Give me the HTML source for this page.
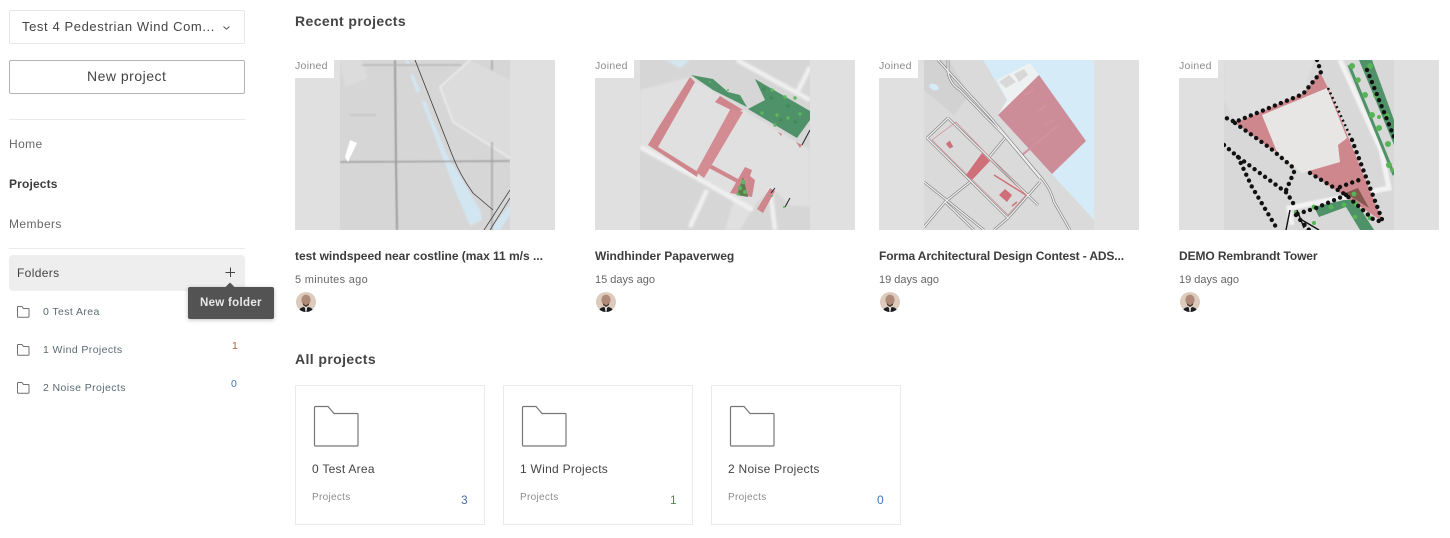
<!DOCTYPE html>
<html><head><meta charset="utf-8"><style>
html,body{margin:0;padding:0;background:#fff}
body{width:1450px;height:538px;position:relative;overflow:hidden;font-family:"Liberation Sans",sans-serif;color:#3c3c3c}
.a{position:absolute;white-space:nowrap}
.t{font-size:12px;line-height:16px;letter-spacing:.27px}
.h{font-size:14px;line-height:18px;font-weight:bold;letter-spacing:.4px;color:#444}
.title{font-size:12px;line-height:16px;font-weight:bold;color:#3c3c3c;top:248px}
.time{font-size:11px;line-height:14px;letter-spacing:0;color:#666;top:273px}
.nav{font-size:12px;line-height:16px;letter-spacing:.4px;color:#666;left:9px}
.fold{font-size:10.5px;line-height:14px;letter-spacing:.4px;color:#5a6a72}
.thumb{position:absolute;top:60px;width:260px;height:170px;background:#e0e0e0;overflow:hidden}
.thumb svg{position:absolute;left:45px;top:0}
.tag{position:absolute;left:0;top:0;width:39px;height:18px;background:#fff;font-size:10.5px;line-height:13px;letter-spacing:.3px;color:#8a8a8a}
.tag span{position:absolute;left:0;top:0;line-height:13px}
.box{position:absolute;top:385px;width:188px;height:138px;border:1px solid #eaeaea}
.sm{font-size:10px;line-height:13px;letter-spacing:.3px;color:#8c8c8c}
</style></head><body>

<div class="a" style="left:9px;top:10px;width:234px;height:32px;border:1px solid #e6e6e6;border-radius:2px"></div>
<div class="a" style="left:22px;top:18px;font-size:13px;line-height:17px;letter-spacing:.6px;color:#444">Test 4 Pedestrian Wind Com...</div>
<svg class="a" style="left:222px;top:25px" width="9" height="6"><path d="M1.5 1.5L4.5 4.2L7.5 1.5" fill="none" stroke="#555" stroke-width="1"/></svg>

<div class="a" style="left:9px;top:60px;width:234px;height:32px;border:1px solid #b4b4b4;border-radius:2px"></div>
<div class="a" style="left:87px;top:68px;font-size:14px;line-height:17px;letter-spacing:.5px;color:#444">New project</div>

<div class="a" style="left:9px;top:119px;width:236px;height:1px;background:#eaeaea"></div>
<div class="a nav" style="top:136px">Home</div>
<div class="a nav" style="top:176px;font-weight:bold;color:#3c3c3c;letter-spacing:.15px">Projects</div>
<div class="a nav" style="top:216px">Members</div>
<div class="a" style="left:9px;top:248px;width:236px;height:1px;background:#eaeaea"></div>

<div class="a" style="left:9px;top:255px;width:236px;height:36px;background:#eeeeee;border-radius:4px"></div>
<div class="a" style="left:17px;top:265px;font-size:12px;line-height:16px;letter-spacing:.35px;color:#444">Folders</div>
<svg class="a" style="left:225px;top:267px" width="11" height="11"><path d="M5.5 .5V10M.5 5.5H10" stroke="#444" stroke-width="1" fill="none"/></svg>

<svg class="a" style="left:17px;top:306px" width="13" height="12"><path d="M.5 1.2Q.5 .5 1.2 .5H5L6.5 2.5H11.3Q12 2.5 12 3.2V10.6Q12 11.3 11.3 11.3H1.2Q.5 11.3 .5 10.6Z" fill="none" stroke="#707070" stroke-width="1"/></svg>
<svg class="a" style="left:17px;top:344px" width="13" height="12"><path d="M.5 1.2Q.5 .5 1.2 .5H5L6.5 2.5H11.3Q12 2.5 12 3.2V10.6Q12 11.3 11.3 11.3H1.2Q.5 11.3 .5 10.6Z" fill="none" stroke="#707070" stroke-width="1"/></svg>
<svg class="a" style="left:17px;top:382px" width="13" height="12"><path d="M.5 1.2Q.5 .5 1.2 .5H5L6.5 2.5H11.3Q12 2.5 12 3.2V10.6Q12 11.3 11.3 11.3H1.2Q.5 11.3 .5 10.6Z" fill="none" stroke="#707070" stroke-width="1"/></svg>
<div class="a fold" style="left:43px;top:305px">0 Test Area</div>
<div class="a fold" style="left:43px;top:343px">1 Wind Projects</div>
<div class="a fold" style="left:43px;top:381px">2 Noise Projects</div>
<div class="a" style="left:232px;top:339px;font-size:10.5px;line-height:14px;color:#a8673a">1</div>
<div class="a" style="left:231px;top:377px;font-size:10.5px;line-height:14px;color:#3f78b5">0</div>

<div class="a" style="left:188px;top:287px;width:86px;height:32px;background:#535353;border-radius:2px;box-shadow:0 1px 4px rgba(0,0,0,.25)"></div>
<svg class="a" style="left:225px;top:282px" width="10" height="6"><path d="M0 5.5L5 .5L10 5.5Z" fill="#535353"/></svg>
<div class="a" style="left:200px;top:296px;font-size:11.5px;line-height:15px;font-weight:bold;color:#e8e8e8;letter-spacing:.3px">New folder</div>

<div class="a h" style="left:295px;top:12px">Recent projects</div>

<!-- Card 1 -->
<div class="thumb" style="left:295px">
<svg width="170" height="170" viewBox="0 0 170 170">
<defs>
<filter id="b1"><feGaussianBlur stdDeviation="0.7"/></filter>
<filter id="b2"><feGaussianBlur stdDeviation="1.1"/></filter>
<filter id="b3"><feGaussianBlur stdDeviation="0.35"/></filter>
</defs>
<rect width="170" height="170" fill="#d6d6d6"/>
<g filter="url(#b1)">
<polygon points="130,0 100,27 113,62 170,98 170,20" fill="#dcdcdc"/>
<polyline points="130,0 100,27 113,62 170,98" fill="none" stroke="#e8e8e8" stroke-width="2"/>
<polygon points="0,0 22,0 28,18 5,27" fill="#dcdcdc"/>
<polygon points="82,42 85,41 107,95 140,150 142,160 130,166 115,130" fill="#d2e6f2"/>
<polygon points="70,15 73,14 80,31 77,33" fill="#d2e6f2"/>
<polygon points="65,0 68,0 70,4 67,4" fill="#d2e6f2"/>
<polygon points="150,170 170,145 170,155 160,170" fill="#d2e6f2"/>
<path d="M55 0L56 102L57 170" stroke="#909090" stroke-width="1.6" fill="none"/>
<path d="M0 102L170 101" stroke="#9c9c9c" stroke-width="1.4" fill="none"/>
<path d="M22 5H122" stroke="#b0b0b0" stroke-width="1.2" fill="none"/>
<path d="M152 0V10M152 82V170" stroke="#a0a0a0" stroke-width="1.4" fill="none"/>
<path d="M10 55H36" stroke="#cccccc" stroke-width="3" fill="none"/>
</g>
<path d="M75 0L113 97Q120 115 133 133L153 150" stroke="#3a3a3a" stroke-width=".8" fill="none"/>
<path d="M144 170L170 130M150 170L170 138" stroke="#444" stroke-width=".8" fill="none"/>
<polygon points="10,80 17,83 8,102 5,97" fill="#fff"/>
</svg>
<div class="tag"><span>Joined</span></div>
</div>

<!-- Card 2 -->
<div class="thumb" style="left:595px">
<svg width="170" height="170" viewBox="0 0 170 170">
<rect width="170" height="170" fill="#d6d6d6"/>
<g filter="url(#b2)">
<polygon points="25,0 50,0 40,8" fill="#d4e8f2"/>
<polygon points="50,17 170,90 170,147 150,145 132,128 115,145 100,170 85,170 95,137 0,87 0,30" fill="#e0e0e0"/>
<path d="M0 87L57 118L113 150M97 0L170 40M170 7L157 33M67 130L50 167M130 128L135 170" stroke="#f0f0f0" stroke-width="4.5" fill="none"/>
</g>
<g filter="url(#b3)">
<polygon points="50,17 55,22 18,87 58,112 57,117 8,85 18,68" fill="#cf868c"/>
<polygon points="80,36 103,50 95,52 75,42" fill="#cf868c"/>
<polygon points="91,48 103,52 64,118 56,112" fill="#d28c92"/>
<polygon points="72,105 98,119 97,123 69,108" fill="#cf868c"/>
<polygon points="105,107 112,110 110,116 115,120 112,137 90,133" fill="#cf868c"/>
<polygon points="103,117 108,137 97,135" fill="#5c7d52"/>
<polygon points="130,128 135,131 123,153 117,149" fill="#cf868c"/>
<polygon points="51,15 73,19 88,32 100,35 107,47 87,37 73,30" fill="#4f9168"/>
<polygon points="115,19 170,51 170,60 157,78 108,49 125,40" fill="#4f9168"/>
<polygon points="138,72 142,74 141,76" fill="#cf868c"/>
<polygon points="156,82 162,85 160,88" fill="#cf868c"/>
<path d="M162 85L170 70M131 133L135 128M145 147L150 138" stroke="#222" stroke-width="1" fill="none"/>
<g fill="#3f8a55"><circle cx="124" cy="29" r="1.6"/><circle cx="131" cy="38" r="1.6"/><circle cx="148" cy="46" r="1.6"/><circle cx="141" cy="60" r="1.6"/><circle cx="155" cy="62" r="1.6"/></g>
<g fill="#5cb85c"><circle cx="132" cy="30" r="1.7"/><circle cx="145" cy="37" r="1.7"/><circle cx="155" cy="38" r="1.7"/><circle cx="137" cy="55" r="1.7"/><circle cx="148" cy="58" r="1.7"/><circle cx="160" cy="54" r="1.7"/><circle cx="122" cy="53" r="1.7"/><circle cx="135" cy="65" r="1.7"/><circle cx="70" cy="22" r="1"/><circle cx="88" cy="30" r="1"/><circle cx="103" cy="122" r="2.2"/><circle cx="100" cy="128" r="2"/><circle cx="105" cy="132" r="2"/><circle cx="98" cy="134" r="1.5"/><circle cx="132" cy="136" r="1"/><circle cx="144" cy="147" r="1"/></g>
</g>
</svg>
<div class="tag"><span>Joined</span></div>
</div>

<!-- Card 3 -->
<div class="thumb" style="left:879px">
<svg width="170" height="170" viewBox="0 0 170 170">
<rect width="170" height="170" fill="#d6ebf8"/>
<polygon points="73,20 106,3 115,15 74,55 83,40" fill="#eef1f1"/>
<polygon points="75,22 85,15 92,22 82,28" fill="#d8d8d8"/>
<polygon points="90,14 100,9 104,15 95,22" fill="#d8d8d8"/>
<polygon points="0,0 59,0 83,40 74,55 170,160 170,170 0,170" fill="#dadada"/>
<polygon points="0,0 25,0 45,35 30,55 0,30" fill="#d2d2d2"/>
<ellipse cx="10" cy="27" rx="5" ry="3" fill="#d6ebf8" transform="rotate(20 10 27)"/>
<polygon points="115,15 162,81 128,114 74,55" fill="#cc8c98"/>
<path d="M100 35L110 30M112 52L122 46M120 65L130 60M98 95L135 65" stroke="#d2929d" stroke-width="2" fill="none"/>
<g fill="none" stroke="#777" stroke-width="2.6">
<path d="M14 0L66 57L119 120Q127 130 130 142L146 170"/>
<path d="M24 0L24 12Q26 24 36 30L60 55L80 75L116 118"/>
<path d="M24 58L114 145M3 78L84 158M24 58L3 78M81 78L66 96M116 122L84 158M46 122L21 142L0 167M0 122L60 170M84 158L70 170M21 142L50 170"/>
</g>
<g fill="none" stroke="#eeeeee" stroke-width="1.4">
<path d="M14 0L66 57L119 120Q127 130 130 142L146 170"/>
<path d="M24 0L24 12Q26 24 36 30L60 55L80 75L116 118"/>
<path d="M24 58L114 145M3 78L84 158M24 58L3 78M81 78L66 96M116 122L84 158M46 122L21 142L0 167M0 122L60 170M84 158L70 170M21 142L50 170"/>
</g>
<path d="M8 80L32 62L102 135L84 155Z" fill="none" stroke="#d08a92" stroke-width=".7"/>
<polygon points="23,82 28,81 28,88 24,88" fill="#cf7078" transform="rotate(-30 26 85)"/>
<polygon points="58,93 66,101 48,120 42,115" fill="#cf7078"/>
<polygon points="81,129 88,135 83,142 75,135" fill="#cf7078"/>
<path d="M70 115L102 135M93 142L88 146" stroke="#cf7078" stroke-width="1.5" fill="none"/>
</svg>
<div class="tag"><span>Joined</span></div>
</div>

<!-- Card 4 -->
<div class="thumb" style="left:1179px">
<svg width="170" height="170" viewBox="0 0 170 170">
<rect width="170" height="170" fill="#d8d8d8"/>
<g filter="url(#b1)">
<polygon points="0,0 90,0 85,15 80,33 11,62 0,40" fill="#dedede"/>
<path d="M116 0L157 90L165 128L120 137L65 148L68 165" fill="none" stroke="#f2f2f2" stroke-width="5"/>
</g>
<g filter="url(#b3)">
<polygon points="96,12 104,28 159,162 119,135 86,113 46,88 11,63 80,33" fill="#cf878e"/>
<polygon points="38,55 103,28 123,78 114,85 116,102 78,113 53,92" fill="#e8e6e4"/>
<polygon points="121,133 134,128 145,148" fill="#84584f"/>
<polygon points="135,0 148,0 170,60 170,85" fill="#4f9168"/>
<path d="M125 5L170 115" stroke="#4f9168" stroke-width="3" fill="none"/>
<polygon points="90,147 120,140 131,140 150,170 136,170 122,147 95,157" fill="#4f9168"/>
<g fill="#56b457"><circle cx="128" cy="6" r="3"/><circle cx="146" cy="6" r="3"/><circle cx="134" cy="20" r="2.8"/><circle cx="141" cy="35" r="3"/><circle cx="152" cy="35" r="3"/><circle cx="148" cy="55" r="3"/><circle cx="163" cy="56" r="3"/><circle cx="155" cy="68" r="3"/><circle cx="164" cy="84" r="3"/><circle cx="165" cy="105" r="3"/><circle cx="168" cy="110" r="2"/><circle cx="155" cy="57" r="2"/><circle cx="90" cy="147" r="2.4"/><circle cx="107" cy="147" r="2.4"/><circle cx="120" cy="145" r="2.4"/><circle cx="132" cy="144" r="2.4"/><circle cx="130" cy="134" r="2.4"/><circle cx="131" cy="157" r="2.4"/><circle cx="146" cy="158" r="2.4"/><circle cx="72" cy="152" r="2"/><circle cx="90" cy="163" r="2"/></g>
</g>
<g fill="none" stroke="#111" stroke-width="4.4" stroke-linecap="round" stroke-dasharray="0 6.5">
<path d="M93 0L97 12L79 34L11 62L0 57"/>
<path d="M11 63L46 88L72 110"/>
<path d="M86 113L122 135L150 160L160 162"/>
<path d="M116 127L135 120M122 135L92 148L70 155"/>
<path d="M0 85L14 97L63 133L72 148"/>
<path d="M14 97L28 127L52 167"/>
<path d="M128 80L159 162"/>
<path d="M72 155L85 170M70 112L60 135"/>
<path d="M143 10L170 77"/>
</g>
<path d="M104 28L128 80" stroke="#111" stroke-width="2.5" stroke-dasharray="2 3" fill="none"/>
<path d="M73 150L80 168M78 160L95 170M66 150L62 170" stroke="#111" stroke-width="1.4" fill="none"/>
</svg>
<div class="tag"><span>Joined</span></div>
</div>

<div class="a title" style="left:295px;letter-spacing:-.02px">test windspeed near costline (max 11 m/s ...</div>
<div class="a title" style="left:595px">Windhinder Papaverweg</div>
<div class="a title" style="left:879px;letter-spacing:-.13px">Forma Architectural Design Contest - ADS...</div>
<div class="a title" style="left:1179px;letter-spacing:-.1px">DEMO Rembrandt Tower</div>
<div class="a time" style="left:295px;letter-spacing:.3px">5 minutes ago</div>
<div class="a time" style="left:595px">15 days ago</div>
<div class="a time" style="left:879px">19 days ago</div>
<div class="a time" style="left:1179px">19 days ago</div>

<svg class="a" style="left:296px;top:292px" width="20" height="20" viewBox="0 0 20 20"><defs><clipPath id="c"><circle cx="10" cy="10" r="10"/></clipPath></defs><g clip-path="url(#c)"><rect width="20" height="20" fill="#ddccbe"/><ellipse cx="10" cy="8" rx="4.6" ry="5.4" fill="#b08a78"/><path d="M7 11Q10 15 13 11L13 13L10 15L7 13Z" fill="#4a3a34"/><path d="M2 20Q4 15 8 15L10 17L12 15Q16 15 18 20Z" fill="#1e1e22"/><path d="M9 15.5H11L10.5 20H9.5Z" fill="#eee"/></g></svg>
<svg class="a" style="left:596px;top:292px" width="20" height="20" viewBox="0 0 20 20"><g clip-path="url(#c)"><rect width="20" height="20" fill="#ddccbe"/><ellipse cx="10" cy="8" rx="4.6" ry="5.4" fill="#b08a78"/><path d="M7 11Q10 15 13 11L13 13L10 15L7 13Z" fill="#4a3a34"/><path d="M2 20Q4 15 8 15L10 17L12 15Q16 15 18 20Z" fill="#1e1e22"/><path d="M9 15.5H11L10.5 20H9.5Z" fill="#eee"/></g></svg>
<svg class="a" style="left:880px;top:292px" width="20" height="20" viewBox="0 0 20 20"><g clip-path="url(#c)"><rect width="20" height="20" fill="#ddccbe"/><ellipse cx="10" cy="8" rx="4.6" ry="5.4" fill="#b08a78"/><path d="M7 11Q10 15 13 11L13 13L10 15L7 13Z" fill="#4a3a34"/><path d="M2 20Q4 15 8 15L10 17L12 15Q16 15 18 20Z" fill="#1e1e22"/><path d="M9 15.5H11L10.5 20H9.5Z" fill="#eee"/></g></svg>
<svg class="a" style="left:1180px;top:292px" width="20" height="20" viewBox="0 0 20 20"><g clip-path="url(#c)"><rect width="20" height="20" fill="#ddccbe"/><ellipse cx="10" cy="8" rx="4.6" ry="5.4" fill="#b08a78"/><path d="M7 11Q10 15 13 11L13 13L10 15L7 13Z" fill="#4a3a34"/><path d="M2 20Q4 15 8 15L10 17L12 15Q16 15 18 20Z" fill="#1e1e22"/><path d="M9 15.5H11L10.5 20H9.5Z" fill="#eee"/></g></svg>

<div class="a h" style="left:295px;top:350px">All projects</div>

<div class="box" style="left:295px"></div>
<div class="box" style="left:503px"></div>
<div class="box" style="left:711px"></div>

<svg class="a" style="left:313px;top:405px" width="46" height="42"><path d="M1.5 2.5Q1.5 1.5 2.5 1.5H15L21 8.5H44Q45 8.5 45 9.5V40Q45 41 44 41H2.5Q1.5 41 1.5 40Z" fill="none" stroke="#777" stroke-width="1.2"/></svg>
<svg class="a" style="left:521px;top:405px" width="46" height="42"><path d="M1.5 2.5Q1.5 1.5 2.5 1.5H15L21 8.5H44Q45 8.5 45 9.5V40Q45 41 44 41H2.5Q1.5 41 1.5 40Z" fill="none" stroke="#777" stroke-width="1.2"/></svg>
<svg class="a" style="left:729px;top:405px" width="46" height="42"><path d="M1.5 2.5Q1.5 1.5 2.5 1.5H15L21 8.5H44Q45 8.5 45 9.5V40Q45 41 44 41H2.5Q1.5 41 1.5 40Z" fill="none" stroke="#777" stroke-width="1.2"/></svg>

<div class="a t" style="left:312px;top:461px;color:#444">0 Test Area</div>
<div class="a t" style="left:520px;top:461px;color:#444">1 Wind Projects</div>
<div class="a t" style="left:728px;top:461px;color:#444">2 Noise Projects</div>
<div class="a sm" style="left:312px;top:491px">Projects</div>
<div class="a sm" style="left:520px;top:491px">Projects</div>
<div class="a sm" style="left:728px;top:491px">Projects</div>
<div class="a" style="left:461px;top:492px;font-size:12px;line-height:16px;color:#4a6fa5">3</div>
<div class="a" style="left:670px;top:492px;font-size:12px;line-height:16px;color:#4a8a5a">1</div>
<div class="a" style="left:877px;top:492px;font-size:12px;line-height:16px;color:#3f78b5">0</div>

</body></html>
